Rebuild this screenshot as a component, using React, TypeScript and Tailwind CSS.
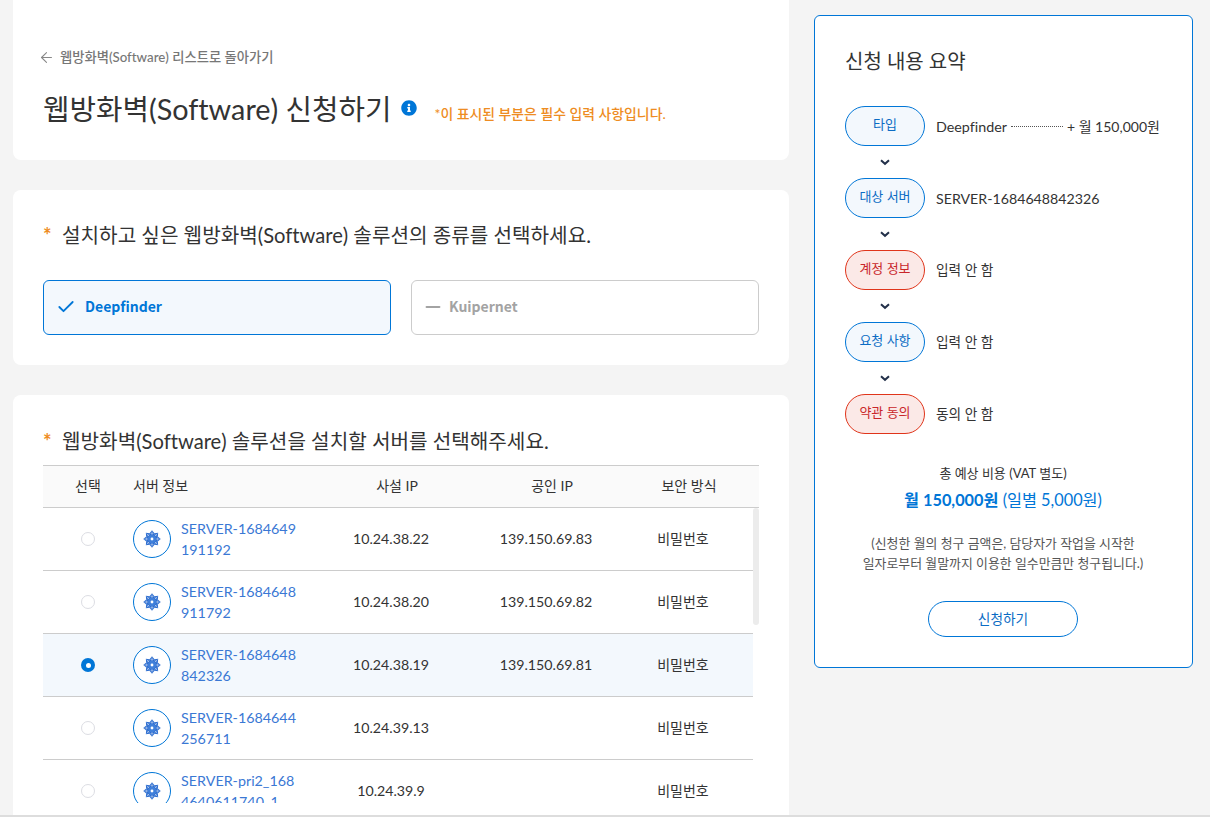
import React from "react";
import { ArrowLeft, Check, Minus } from "lucide-react";
import { FaInfoCircle } from "react-icons/fa";

function Flake() {
  const petals = [0, 45, 90, 135, 180, 225, 270, 315];
  return (
    <svg width="20" height="20" viewBox="0 0 24 24" aria-hidden="true">
      {petals.map((a) => (
        <g key={a} transform={`rotate(${a} 12 12)`}>
          <path d="M12 1.5l3 3.6-1.2 4H10.2L9 5.1z" fill="#2f6fd0" />
          <path d="M12 3v6.5" stroke="#ffffff" strokeWidth="0.7" opacity="0.8" />
          <path d="M10 5.6h4" stroke="#ffffff" strokeWidth="0.6" opacity="0.7" />
        </g>
      ))}
      <circle cx="12" cy="12" r="5" fill="#3f7fda" />
      <circle cx="12" cy="12" r="1.7" fill="#ffffff" />
    </svg>
  );
}

function Chevron() {
  return (
    <svg width="10" height="7" viewBox="0 0 10 7" aria-hidden="true">
      <path d="M1 1.2l4 3.6 4-3.6" stroke="#223049" strokeWidth="2" fill="none" />
    </svg>
  );
}

const rows = [
  { n: "SERVER-1684649191192", p: "10.24.38.22", g: "139.150.69.83" },
  { n: "SERVER-1684648911792", p: "10.24.38.20", g: "139.150.69.82" },
  { n: "SERVER-1684648842326", p: "10.24.38.19", g: "139.150.69.81", on: true },
  { n: "SERVER-1684644256711", p: "10.24.39.13", g: "" },
  { n: "SERVER-pri2_1684640611740_1", p: "10.24.39.9", g: "" },
];

function Row({ r }: { r: (typeof rows)[number] }) {
  return (
    <div
      className={`grid h-[63px] shrink-0 grid-cols-[90px_190px_136px_174px_100px] items-center border-b border-[#cccccc] text-[14px] text-[#333333] ${
        r.on ? "bg-[#f3f8fd]" : "bg-white"
      }`}
    >
      <div className="flex justify-center">
        {r.on ? (
          <span className="flex h-[14px] w-[14px] items-center justify-center rounded-full bg-[#0076d7]">
            <span className="h-[5px] w-[5px] rounded-full bg-white" />
          </span>
        ) : (
          <span className="h-[14px] w-[14px] rounded-full border border-[#dcdde3] bg-white" />
        )}
      </div>
      <div className="flex items-center gap-[10px]">
        <span className="flex h-[38px] w-[38px] shrink-0 items-center justify-center rounded-full border border-[#0076d7] bg-white">
          <Flake />
        </span>
        <span className="w-[118px] break-all text-[14.3px] leading-[21px] text-[#3a78d4]">{r.n}</span>
      </div>
      <div className="pb-[1px] text-center text-[14.2px]">{r.p}</div>
      <div className="pb-[1px] text-center text-[14.2px]">{r.g}</div>
      <div className="pb-[2px] text-center">비밀번호</div>
    </div>
  );
}

function Step({ label, red, children }: { label: string; red?: boolean; children: React.ReactNode }) {
  return (
    <div className="flex h-10 items-center">
      <span
        className={`flex h-10 w-20 shrink-0 items-center justify-center rounded-full border pb-[2px] text-[13px] ${
          red ? "border-[#e0341a] bg-[#fbe9e7] text-[#c9262a]" : "border-[#0076d7] bg-[#f3f8fd] text-[#0b6cc4]"
        }`}
      >
        {label}
      </span>
      <div className="ml-[11px] flex flex-1 items-center text-[13.7px] text-[#333333]">{children}</div>
    </div>
  );
}

function Arrow() {
  return (
    <div className="flex h-8 w-20 items-center justify-center">
      <Chevron />
    </div>
  );
}

export default function App() {
  return (
    <div
      className="flex h-[819px] flex-col overflow-hidden bg-[#f4f4f4] [font-variant-ligatures:none]"
      style={{ fontFamily: 'Lato, "Noto Sans CJK KR", sans-serif' }}
    >
      <main className="flex h-[815px] shrink-0 items-start gap-[25px] overflow-hidden pl-[13px] pt-[15px]">
        <div className="flex w-[776px] shrink-0 flex-col gap-[30px]">
          <section className="-mt-[15px] flex h-[160px] flex-col rounded-b-lg bg-white pl-[30px] pt-[48px]">
            <div className="flex items-center text-[13.3px] font-medium leading-[18px] text-[#777777]">
              <ArrowLeft size={17} strokeWidth={1.5} className="-ml-[5px] mr-[5px] text-[#888888]" />
              웹방화벽(Software) 리스트로 돌아가기
            </div>
            <div className="mt-[22px] flex items-center">
              <h1 className="text-[28.8px] font-normal leading-[42px] text-[#333333]">웹방화벽(Software) 신청하기</h1>
              <FaInfoCircle className="ml-[9px] mb-[3px] text-[#0076d7]" size={16} />
              <span className="ml-[18px] mt-[10px] text-[13.9px] font-medium text-[#ee8c22]">*이 표시된 부분은 필수 입력 사항입니다.</span>
            </div>
          </section>

          <section className="h-[175px] rounded-lg bg-white px-[30px] pt-[30px]">
            <div className="flex items-center text-[20.16px] leading-[30px] text-[#333333]">
              <span className="mr-[10px] w-[9px] font-bold text-[#ee8c22]">*</span>
              설치하고 싶은 웹방화벽(Software) 솔루션의 종류를 선택하세요.
            </div>
            <div className="mt-[30px] grid grid-cols-2 gap-5">
              <div className="flex h-[55px] items-center rounded-md border border-[#0076d7] bg-[#f3f8fd] pb-[3px] pl-[12px] font-['Noto_Sans_CJK_KR'] text-[14px] font-bold text-[#0076d7]">
                <Check size={20} strokeWidth={2.2} className="mr-[9px] mt-[2px]" />
                Deepfinder
              </div>
              <div className="flex h-[55px] items-center rounded-md border border-[#cccccc] bg-white pb-[3px] pl-[10px] font-['Noto_Sans_CJK_KR'] text-[14px] font-bold text-[#a3a3a3]">
                <Minus size={22} strokeWidth={2.2} className="mr-[5px] mt-[2px]" />
                Kuipernet
              </div>
            </div>
          </section>

          <section className="h-[420px] rounded-t-lg bg-white px-[30px] pt-[31px]">
            <div className="flex items-center text-[20.16px] leading-[30px] text-[#333333]">
              <span className="mr-[10px] w-[9px] font-bold text-[#ee8c22]">*</span>
              웹방화벽(Software) 솔루션을 설치할 서버를 선택해주세요.
            </div>
            <div className="mt-[9px] grid h-[43px] grid-cols-[90px_190px_148px_162px_112px] items-center border-y border-[#cccccc] bg-[#fafafa] pb-[2px] text-[14px] text-[#333333]">
              <div className="text-center">선택</div>
              <div>서버 정보</div>
              <div className="text-center">사설 IP</div>
              <div className="text-center">공인 IP</div>
              <div className="text-center">보안 방식</div>
            </div>
            <div className="relative h-[295px] overflow-hidden">
              <div className="mr-[6px] flex flex-col">
                {rows.map((r) => (
                  <Row key={r.n} r={r} />
                ))}
              </div>
              <div className="absolute right-0 top-0 h-[117px] w-[6px] rounded-full bg-[#ececec]" />
            </div>
          </section>
        </div>

        <aside className="h-[653px] w-[379px] shrink-0 rounded-md border border-[#0076d7] bg-white pl-[30px] pr-[31px] pt-[30px]">
          <h2 className="text-[20px] font-normal leading-[30px] text-[#333333]">신청 내용 요약</h2>
          <div className="mt-[30px] flex flex-col">
            <Step label="타입">
              <span className="pt-[1px] text-[14.3px]">Deepfinder</span>
              <span className="mx-[4px] mt-[1px] h-0 w-[52px] border-t border-dotted border-[#555555]" />
              <span className="pt-[1px] text-[14px]">+ 월 150,000원</span>
            </Step>
            <Arrow />
            <Step label="대상 서버"><span className="pt-[1px] text-[14.2px]">SERVER-1684648842326</span></Step>
            <Arrow />
            <Step label="계정 정보" red>입력 안 함</Step>
            <Arrow />
            <Step label="요청 사항">입력 안 함</Step>
            <Arrow />
            <Step label="약관 동의" red>동의 안 함</Step>
          </div>
          <p className="mt-[29px] text-center text-[13px] leading-[20px] text-[#333333]">총 예상 비용 (VAT 별도)</p>
          <p className="mt-[4px] text-center text-[16.3px] leading-[26px] text-[#0076d7]">
            <b className="font-bold">월 150,000원</b> (일별 5,000원)
          </p>
          <p className="mt-[20px] text-center text-[12.9px] leading-[20px] text-[#555555]">
            (신청한 월의 청구 금액은, 담당자가 작업을 시작한
            <br />
            일자로부터 월말까지 이용한 일수만큼만 청구됩니다.)
          </p>
          <button className="mx-auto mt-[28px] flex h-9 w-[150px] items-center justify-center rounded-full border border-[#0076d7] bg-white text-[13.7px] text-[#0b6cc4]">
            신청하기
          </button>
        </aside>
      </main>
      <div className="h-[4px] shrink-0 border-t-2 border-[#dddddd] bg-white" />
    </div>
  );
}
